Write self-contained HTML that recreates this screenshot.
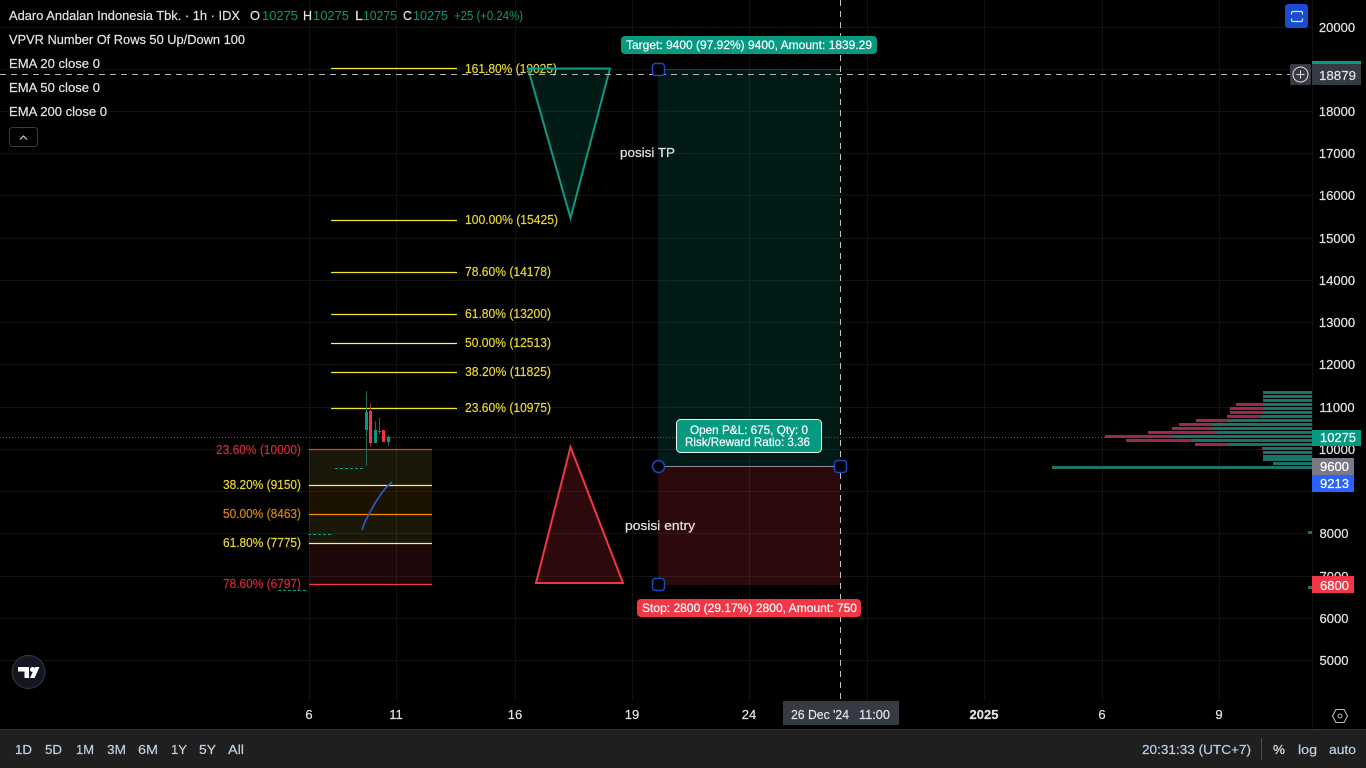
<!DOCTYPE html>
<html><head><meta charset="utf-8"><style>
html,body{margin:0;padding:0;background:#000;width:1366px;height:768px;overflow:hidden}
svg{display:block}
text{font-family:"Liberation Sans",sans-serif;font-size:13px;fill:#e3e3e3;stroke:#e3e3e3;stroke-width:.2}
.g{stroke:#121212;stroke-width:1}
.ax text{text-anchor:middle}
.y{fill:#e8d72e;stroke:#e8d72e}
.o{fill:#d9860c;stroke:#d9860c}
.r{fill:#d6283a;stroke:#d6283a}
.t{fill:#089981;stroke:#089981;stroke-width:0}
.b{fill:#bcd0e6;stroke:#bcd0e6}
.w{fill:#fff;stroke:#fff}
.vg rect{fill:#1d7267}
.vr rect{fill:#9a2850}
</style></head><body>
<svg width="1366" height="768" viewBox="0 0 1366 768" xmlns="http://www.w3.org/2000/svg">
<rect width="1366" height="768" fill="#000"/>
<g class="g">
<path d="M0 27.5H1312M0 69.5H1312M0 111.5H1312M0 153.5H1312M0 195.5H1312M0 238.5H1312M0 280.5H1312M0 322.5H1312M0 364.5H1312M0 407.5H1312M0 449.5H1312M0 491.5H1312M0 533.5H1312M0 576.5H1312M0 618.5H1312M0 660.5H1312"/>
<path d="M309.5 0V701M396.5 0V701M515.5 0V701M632.5 0V701M749.5 0V701M867.5 0V701M984.5 0V701M1102.5 0V701M1219.5 0V701M1312.5 0V729"/>
</g>

<!-- lower fib zones -->
<rect x="309" y="450" width="123" height="35" fill="rgba(255,240,90,.1)"/>
<rect x="309" y="485" width="123" height="29" fill="rgba(242,140,0,.12)"/>
<rect x="309" y="514" width="123" height="29" fill="rgba(255,240,90,.1)"/>
<rect x="309" y="543" width="123" height="41" fill="rgba(242,54,69,.12)"/>

<!-- position tool -->
<rect x="658" y="69" width="182" height="397" fill="rgba(8,153,129,.17)"/>
<rect x="658" y="466" width="182" height="119" fill="rgba(242,54,69,.18)"/>
<path d="M658 69.5H840" stroke="#0d4a3f"/>
<path d="M658 466.5H840" stroke="#8a8d93"/>

<!-- teal dotted last price -->
<path d="M0 437.5H1312" stroke="#0e7c6b" stroke-dasharray="1 2"/>

<!-- upper fib -->
<g stroke-width="1.2" fill="none">
<path d="M331 68.5H457" stroke="#f5e52a"/>
<path d="M331 220.5H457" stroke="#f5e52a"/>
<path d="M331 272.5H457" stroke="#f5e52a"/>
<path d="M331 314.5H457" stroke="#f5e52a"/>
<path d="M331 343.5H457" stroke="#f5eea0"/>
<path d="M331 372.5H457" stroke="#f5e52a"/>
<path d="M331 408.5H457" stroke="#f5e52a"/>
<path d="M309 449.5H432" stroke="#f23645"/>
<path d="M309 485.5H432" stroke="#ffee66"/>
<path d="M309 514.5H432" stroke="#f28c00"/>
<path d="M309 543.5H432" stroke="#ffee88"/>
<path d="M309 584.5H432" stroke="#f23645"/>
</g>
<text class="y" x="465" y="73" textLength="92" lengthAdjust="spacingAndGlyphs">161.80% (19025)</text>
<text class="y" x="465" y="224" textLength="93" lengthAdjust="spacingAndGlyphs">100.00% (15425)</text>
<text class="y" x="465" y="276" textLength="86" lengthAdjust="spacingAndGlyphs">78.60% (14178)</text>
<text class="y" x="465" y="318" textLength="86" lengthAdjust="spacingAndGlyphs">61.80% (13200)</text>
<text class="y" x="465" y="347" textLength="86" lengthAdjust="spacingAndGlyphs">50.00% (12513)</text>
<text class="y" x="465" y="376" textLength="86" lengthAdjust="spacingAndGlyphs">38.20% (11825)</text>
<text class="y" x="465" y="412" textLength="86" lengthAdjust="spacingAndGlyphs">23.60% (10975)</text>
<text class="r" x="216" y="454" textLength="85" lengthAdjust="spacingAndGlyphs">23.60% (10000)</text>
<text class="y" x="223" y="489" textLength="78" lengthAdjust="spacingAndGlyphs">38.20% (9150)</text>
<text class="o" x="223" y="518" textLength="78" lengthAdjust="spacingAndGlyphs">50.00% (8463)</text>
<text class="y" x="223" y="547" textLength="78" lengthAdjust="spacingAndGlyphs">61.80% (7775)</text>
<text class="r" x="223" y="588" textLength="78" lengthAdjust="spacingAndGlyphs">78.60% (6797)</text>

<!-- triangles -->
<path d="M528 68.5H610L570.5 218Z" fill="rgba(8,153,129,.17)" stroke="#0d9a82" stroke-width="2"/>
<path d="M570.5 447L623 583H536Z" fill="rgba(242,54,69,.18)" stroke="#f23645" stroke-width="2"/>
<text x="620" y="157" textLength="55" lengthAdjust="spacingAndGlyphs">posisi TP</text>
<text x="625" y="530" textLength="70" lengthAdjust="spacingAndGlyphs">posisi entry</text>

<!-- candles -->
<path d="M366.5 391V466" stroke="#1f6b5c" stroke-width="1"/>
<rect x="365" y="412" width="3" height="18" fill="#089981"/>
<path d="M370.5 403V447" stroke="#8c2a3a"/>
<rect x="369" y="411" width="3" height="32" fill="#f23645"/>
<path d="M375.5 421V443" stroke="#1f6b5c"/>
<rect x="374" y="430" width="3" height="13" fill="#089981"/>
<path d="M379.5 418V434" stroke="#1f6b5c"/>
<rect x="378" y="431" width="3" height="1" fill="#089981"/>
<rect x="382" y="430" width="3" height="12" fill="#f23645"/>
<path d="M388.5 435V446" stroke="#1f6b5c"/>
<rect x="387" y="437" width="3" height="5" fill="#089981"/>

<!-- curve and dashes -->
<path d="M362 530C364 524 365 521 367 518C371 510 375 503 379 497C383 491 387 486 392 482" fill="none" stroke="#2a5cc9" stroke-width="1.6"/>
<path d="M335 468.5H364" stroke="#0d9a82" stroke-dasharray="3 2"/>
<path d="M308 534.5H333" stroke="#0d9a82" stroke-dasharray="3 2"/>
<path d="M278 590.5H307" stroke="#0d9a82" stroke-dasharray="3 2"/>

<!-- volume profile -->
<g class="vr">
<rect x="1236" y="403" width="27" height="3"/>
<rect x="1230" y="407" width="33" height="3"/>
<rect x="1230" y="411" width="33" height="3"/>
<rect x="1227" y="415" width="33" height="3"/>
<rect x="1196" y="419" width="32" height="3"/>
<rect x="1179" y="423" width="33" height="3"/>
<rect x="1172" y="427" width="40" height="3"/>
<rect x="1148" y="431" width="68" height="3"/>
<rect x="1105" y="435" width="67" height="3"/>
<rect x="1126" y="439" width="66" height="3"/>
<rect x="1195" y="443" width="33" height="3"/>
<rect x="1262" y="447" width="1" height="3"/>
</g>
<g class="vg">
<rect x="1263" y="391" width="49" height="3"/>
<rect x="1263" y="395" width="49" height="3"/>
<rect x="1263" y="399" width="49" height="3"/>
<rect x="1263" y="403" width="49" height="3"/>
<rect x="1263" y="407" width="49" height="3"/>
<rect x="1263" y="411" width="49" height="3"/>
<rect x="1260" y="415" width="52" height="3"/>
<rect x="1228" y="419" width="84" height="3"/>
<rect x="1212" y="423" width="100" height="3"/>
<rect x="1212" y="427" width="100" height="3"/>
<rect x="1216" y="431" width="96" height="3"/>
<rect x="1172" y="435" width="140" height="3"/>
<rect x="1192" y="439" width="120" height="3"/>
<rect x="1228" y="443" width="84" height="3"/>
<rect x="1263" y="447" width="49" height="3"/>
<rect x="1263" y="451" width="49" height="3"/>
<rect x="1263" y="455" width="49" height="3"/>
<rect x="1263" y="458" width="49" height="3"/>
<rect x="1273" y="462" width="39" height="3"/>
<rect x="1052" y="466" width="260" height="3"/>
<rect x="1308" y="531" width="4" height="3"/>
<rect x="1308" y="586" width="4" height="3"/>
</g>

<!-- crosshair -->
<path d="M0 74.5H1290" stroke="#b4b4b4" stroke-dasharray="6 5"/>
<path d="M840.5 0V701" stroke="#c0c0c0" stroke-dasharray="6 5"/>

<!-- handles -->
<g fill="#000" stroke="#1d48c4" stroke-width="1.5">
<rect x="652.5" y="63.5" width="12" height="12" rx="3"/>
<rect x="834.5" y="460.5" width="12" height="12" rx="3"/>
<rect x="652.5" y="578.5" width="12" height="12" rx="3"/>
<circle cx="658.5" cy="466.5" r="6"/>
</g>

<!-- position labels -->
<rect x="621" y="36" width="256" height="18" rx="4" fill="#089981"/>
<text class="w" x="626" y="49" style="font-size:12px" textLength="246" lengthAdjust="spacingAndGlyphs">Target: 9400 (97.92%) 9400, Amount: 1839.29</text>
<rect x="637" y="599" width="224" height="18" rx="4" fill="#f23645"/>
<text class="w" x="642" y="612" style="font-size:12px" textLength="215" lengthAdjust="spacingAndGlyphs">Stop: 2800 (29.17%) 2800, Amount: 750</text>
<rect x="676.5" y="419.5" width="145" height="33" rx="4" fill="#089981" stroke="#e8f5f2"/>
<text class="w" x="690" y="434" style="font-size:12px" textLength="118" lengthAdjust="spacingAndGlyphs">Open P&amp;L: 675, Qty: 0</text>
<text class="w" x="685" y="446" style="font-size:12px" textLength="125" lengthAdjust="spacingAndGlyphs">Risk/Reward Ratio: 3.36</text>

<!-- legend -->
<text x="9" y="20" textLength="231" lengthAdjust="spacingAndGlyphs">Adaro Andalan Indonesia Tbk. · 1h · IDX</text>
<text x="250" y="20" textLength="10" lengthAdjust="spacingAndGlyphs">O</text>
<text class="t" x="262" y="20" textLength="36" lengthAdjust="spacingAndGlyphs">10275</text>
<text x="303" y="20" textLength="9" lengthAdjust="spacingAndGlyphs">H</text>
<text class="t" x="313" y="20" textLength="36" lengthAdjust="spacingAndGlyphs">10275</text>
<text x="355" y="20" textLength="8" lengthAdjust="spacingAndGlyphs">L</text>
<text class="t" x="363" y="20" textLength="34" lengthAdjust="spacingAndGlyphs">10275</text>
<text x="403" y="20" textLength="9" lengthAdjust="spacingAndGlyphs">C</text>
<text class="t" x="413" y="20" textLength="35" lengthAdjust="spacingAndGlyphs">10275</text>
<text class="t" x="454" y="20" textLength="69" lengthAdjust="spacingAndGlyphs">+25 (+0.24%)</text>
<text x="9" y="44" textLength="236" lengthAdjust="spacingAndGlyphs">VPVR Number Of Rows 50 Up/Down 100</text>
<text x="9" y="68" textLength="91" lengthAdjust="spacingAndGlyphs">EMA 20 close 0</text>
<text x="9" y="92" textLength="91" lengthAdjust="spacingAndGlyphs">EMA 50 close 0</text>
<text x="9" y="116" textLength="98" lengthAdjust="spacingAndGlyphs">EMA 200 close 0</text>
<rect x="9.5" y="127.5" width="28" height="19" rx="3" fill="#000" stroke="#363a45"/>
<path d="M20 139.5L23.5 136L27 139.5" fill="none" stroke="#d8d8d8" stroke-width="1.1"/>

<!-- top-right button -->
<rect x="1285" y="4" width="23" height="24" rx="3" fill="#1a4bd1"/>
<path d="M1293 11.5H1301Q1302.5 11.5 1302.5 13V14.5M1302.5 18.5V20Q1302.5 21.5 1301 21.5H1293Q1291.5 21.5 1291.5 20V18.5M1291.5 14.5V13Q1291.5 11.5 1293 11.5" fill="none" stroke="#d5e0ff" stroke-width="1.2"/>

<!-- y axis labels -->
<g class="ax">
<text x="1337" y="32">20000</text>
<text x="1337" y="116">18000</text>
<text x="1337" y="158">17000</text>
<text x="1337" y="200">16000</text>
<text x="1337" y="243">15000</text>
<text x="1337" y="285">14000</text>
<text x="1337" y="327">13000</text>
<text x="1337" y="369">12000</text>
<text x="1337" y="412">11000</text>
<text x="1337" y="454">10000</text>
<text x="1334" y="538">8000</text>
<text x="1334" y="581">7000</text>
<text x="1334" y="623">6000</text>
<text x="1334" y="665">5000</text>
</g>
<rect x="1312" y="61" width="49" height="3" fill="#089981"/>
<rect x="1312" y="64" width="49" height="21" rx="1" fill="#363a45"/>
<text x="1319" y="80" textLength="37" lengthAdjust="spacingAndGlyphs">18879</text>
<rect x="1290" y="64" width="21" height="21" rx="1" fill="#363a45"/>
<circle cx="1300.5" cy="74.5" r="7.5" fill="none" stroke="#e8e8e8" stroke-width="1"/>
<path d="M1300.5 70.5V78.5M1296.5 74.5H1304.5" stroke="#e8e8e8" stroke-width="1"/>
<rect x="1312" y="430" width="49" height="16" fill="#089981"/>
<text class="w" x="1320" y="442" textLength="36" lengthAdjust="spacingAndGlyphs">10275</text>
<rect x="1312" y="458" width="42" height="17" fill="#787b86"/>
<text class="w" x="1320" y="471" textLength="29" lengthAdjust="spacingAndGlyphs">9600</text>
<rect x="1312" y="475" width="42" height="17" fill="#2962ff"/>
<text class="w" x="1320" y="488" textLength="29" lengthAdjust="spacingAndGlyphs">9213</text>
<rect x="1312" y="576" width="42" height="17" fill="#f23645"/>
<text class="w" x="1320" y="590" textLength="29" lengthAdjust="spacingAndGlyphs">6800</text>

<!-- x axis -->
<g class="ax">
<text x="309" y="719">6</text>
<text x="396" y="719">11</text>
<text x="515" y="719">16</text>
<text x="632" y="719">19</text>
<text x="749" y="719">24</text>
<text x="984" y="719" style="font-weight:bold">2025</text>
<text x="1102" y="719">6</text>
<text x="1219" y="719">9</text>
</g>
<rect x="783" y="701" width="116" height="24" fill="#363a45"/>
<text x="791" y="719" textLength="58" lengthAdjust="spacingAndGlyphs">26 Dec '24</text>
<text x="859" y="719" textLength="31" lengthAdjust="spacingAndGlyphs">11:00</text>
<path d="M1336 709.5H1344L1347.5 716L1344 722.5H1336L1332.5 716Z" fill="none" stroke="#b8b8b8" stroke-width="1.1"/>
<circle cx="1340" cy="716" r="2" fill="none" stroke="#b8b8b8" stroke-width="1"/>

<!-- logo -->
<circle cx="28.5" cy="672" r="16.5" fill="#131722" stroke="#363a45" stroke-width="1"/>
<path d="M18 667H29V678H24.5V671.5H18Z" fill="#fff"/>
<circle cx="32.5" cy="669.5" r="2.5" fill="#fff"/>
<path d="M35 667H39.5L34.5 678H30Z" fill="#fff"/>

<!-- bottom toolbar -->
<rect x="0" y="729" width="1366" height="39" fill="#1f1f1f"/>
<path d="M0 729.5H1366" stroke="#333"/>
<text class="b" x="15" y="754" textLength="17" lengthAdjust="spacingAndGlyphs">1D</text>
<text class="b" x="45" y="754" textLength="17" lengthAdjust="spacingAndGlyphs">5D</text>
<text class="b" x="76" y="754" textLength="18" lengthAdjust="spacingAndGlyphs">1M</text>
<text class="b" x="107" y="754" textLength="19" lengthAdjust="spacingAndGlyphs">3M</text>
<text class="b" x="138" y="754" textLength="20" lengthAdjust="spacingAndGlyphs">6M</text>
<text class="b" x="171" y="754" textLength="16" lengthAdjust="spacingAndGlyphs">1Y</text>
<text class="b" x="199" y="754" textLength="17" lengthAdjust="spacingAndGlyphs">5Y</text>
<text class="b" x="228" y="754" textLength="16" lengthAdjust="spacingAndGlyphs">All</text>
<text class="b" x="1142" y="754" textLength="109" lengthAdjust="spacingAndGlyphs">20:31:33 (UTC+7)</text>
<path d="M1261.5 738V760" stroke="#4a4a4a"/>
<text x="1273" y="754" textLength="12" lengthAdjust="spacingAndGlyphs">%</text>
<text class="b" x="1298" y="754" textLength="19" lengthAdjust="spacingAndGlyphs">log</text>
<text class="b" x="1329" y="754" textLength="27" lengthAdjust="spacingAndGlyphs">auto</text>
</svg>
</body></html>
